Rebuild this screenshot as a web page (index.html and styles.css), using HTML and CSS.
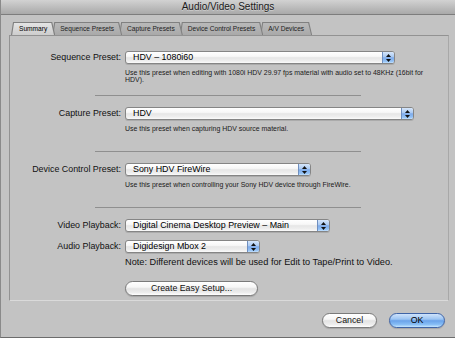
FILE: index.html
```html
<!DOCTYPE html>
<html>
<head>
<meta charset="utf-8">
<link rel="stylesheet" href="styles.css">
</head>
<body>
<div class="window">
  <div class="titlebar">Audio/Video Settings</div>
  <div class="content">
    <div class="tabs">
      <div class="tab tab-active"><span>Summary</span></div>
      <div class="tab tab-2"><span>Sequence Presets</span></div>
      <div class="tab tab-3"><span>Capture Presets</span></div>
      <div class="tab tab-4"><span>Device Control Presets</span></div>
      <div class="tab tab-5"><span>A/V Devices</span></div>
    </div>
    <div class="panel">
      <div class="section">
        <label class="label">Sequence Preset:</label>
        <div class="popup popup-seq"><span class="popup-text">HDV – 1080i60</span><span class="arrows"><svg width="5" height="8" viewBox="0 0 5 8"><polygon points="2.5,0 5,3 0,3" fill="#111"/><polygon points="0,5 5,5 2.5,8" fill="#111"/></svg></span></div>
        <p class="desc">Use this preset when editing with 1080i HDV 29.97 fps material with audio set to 48KHz (16bit for<br>HDV).</p>
      </div>
      <div class="separator"></div>
      <div class="section">
        <label class="label">Capture Preset:</label>
        <div class="popup popup-cap"><span class="popup-text">HDV</span><span class="arrows"><svg width="5" height="8" viewBox="0 0 5 8"><polygon points="2.5,0 5,3 0,3" fill="#111"/><polygon points="0,5 5,5 2.5,8" fill="#111"/></svg></span></div>
        <p class="desc">Use this preset when capturing HDV source material.</p>
      </div>
      <div class="separator"></div>
      <div class="section">
        <label class="label">Device Control Preset:</label>
        <div class="popup popup-dev"><span class="popup-text">Sony HDV FireWire</span><span class="arrows"><svg width="5" height="8" viewBox="0 0 5 8"><polygon points="2.5,0 5,3 0,3" fill="#111"/><polygon points="0,5 5,5 2.5,8" fill="#111"/></svg></span></div>
        <p class="desc">Use this preset when controlling your Sony HDV device through FireWire.</p>
      </div>
      <div class="separator"></div>
      <div class="row">
        <label class="label">Video Playback:</label>
        <div class="popup popup-vid"><span class="popup-text">Digital Cinema Desktop Preview – Main</span><span class="arrows"><svg width="5" height="8" viewBox="0 0 5 8"><polygon points="2.5,0 5,3 0,3" fill="#111"/><polygon points="0,5 5,5 2.5,8" fill="#111"/></svg></span></div>
      </div>
      <div class="row row-audio">
        <label class="label">Audio Playback:</label>
        <div class="popup popup-aud"><span class="popup-text">Digidesign Mbox 2</span><span class="arrows"><svg width="5" height="8" viewBox="0 0 5 8"><polygon points="2.5,0 5,3 0,3" fill="#111"/><polygon points="0,5 5,5 2.5,8" fill="#111"/></svg></span></div>
      </div>
      <p class="note">Note: Different devices will be used for Edit to Tape/Print to Video.</p>
      <div class="easy-row">
        <button class="pill easy">Create Easy Setup...</button>
      </div>
    </div>
    <div class="actions">
      <button class="pill cancel">Cancel</button>
      <button class="pill ok">OK</button>
    </div>
  </div>
</div>
</body>
</html>
```
FILE: styles.css
```css
html, body {
  margin: 0;
  padding: 0;
}
body {
  width: 455px;
  height: 338px;
  overflow: hidden;
  background: #c3c3c3;
  font-family: "Liberation Sans", Arial, sans-serif;
  color: #111;
}
.window {
  box-sizing: border-box;
  width: 455px;
  height: 338px;
  border-left: 1px solid #8a8a8a;
  border-bottom: 1px solid #6c6c6c;
  background: #c3c3c3;
}
.titlebar {
  height: 14px;
  line-height: 14px;
  border-bottom: 1px solid #7d7d7d;
  background: linear-gradient(#d2d2d2, #b9b9b9 60%, #a9a9a9);
  text-align: center;
  font-size: 10px;
  color: #1a1a1a;
  text-shadow: 0 1px 0 rgba(255,255,255,0.35);
}
.content {
  padding: 7px 8px 0 7px;
}
.tabs {
  display: flex;
  height: 13px;
  padding-left: 3px;
  position: relative;
  z-index: 2;
}
.tab {
  position: relative;
  height: 13px;
  padding: 0 8px;
  margin-right: -3px;
  font-size: 6.6px;
  line-height: 13px;
  color: #222;
  background: #808080;
  clip-path: polygon(2px 0, calc(100% - 3px) 0, 100% 100%, 0 100%);
}
.tab::before {
  content: "";
  position: absolute;
  top: 1px;
  left: 1px;
  right: 1px;
  bottom: 0;
  background: linear-gradient(#b9b9b9, #a9a9a9);
  clip-path: polygon(2px 0, calc(100% - 3px) 0, 100% 100%, 0 100%);
}
.tab span {
  position: relative;
}
.tab-active { z-index: 6; color: #000; }
.tab-active::before { background: linear-gradient(#e4e4e4, #cbcbcb); bottom: -1px; }
.tab-2 { z-index: 5; }
.tab-3 { z-index: 4; }
.tab-4 { z-index: 3; }
.tab-5 { z-index: 2; }
.panel {
  box-sizing: border-box;
  width: 440px;
  margin-left: 1px;
  height: 266px;
  border: 1px solid #929292;
  border-right-color: #a8a8a8;
  border-bottom-color: #dadada;
  padding-top: 15px;
  background: #c3c3c3;
}
.section {
  height: 44px;
  display: grid;
  grid-template-columns: 111px auto;
  grid-template-rows: 13px auto;
  column-gap: 4px;
  align-content: start;
}
.row {
  display: grid;
  grid-template-columns: 111px auto;
  column-gap: 4px;
  align-items: center;
}
.row-audio {
  margin-top: 8px;
}
.label {
  text-align: right;
  font-size: 8.9px;
  line-height: 13px;
  color: #111;
  white-space: nowrap;
}
.popup {
  justify-self: start;
  box-sizing: border-box;
  height: 13px;
  display: flex;
  align-items: stretch;
  border: 1px solid #858585;
  border-radius: 3px;
  background: linear-gradient(#ffffff 0%, #f7f7f7 40%, #e6e6e6 52%, #eeeeee 80%, #fbfbfb 100%);
  box-shadow: 0 1px 0 rgba(0,0,0,0.12);
}
.popup-text {
  flex: 1;
  padding-left: 7px;
  font-size: 8.9px;
  line-height: 11px;
  color: #000;
  white-space: nowrap;
}
.arrows {
  width: 11px;
  display: flex;
  align-items: center;
  justify-content: center;
  border-left: 1px solid #6f8fbf;
  border-radius: 0 2px 2px 0;
  background: linear-gradient(#d6e6fa 0%, #a9c9f2 45%, #7daaea 52%, #94c2f5 85%, #c4e2ff 100%);
}
.popup-seq { width: 270px; }
.popup-cap { width: 289px; }
.popup-dev { width: 186px; }
.popup-vid { width: 205px; }
.popup-aud { width: 135px; }
.desc {
  grid-column: 2;
  margin: 5px 0 0 0;
  font-size: 6.95px;
  line-height: 7px;
  color: #1a1a1a;
  white-space: nowrap;
}
.separator {
  width: 266px;
  height: 0;
  margin: 0 0 11px 85px;
  border-top: 1px solid #8f8f8f;
}
.note {
  margin: 4px 0 0 115px;
  font-size: 9.2px;
  line-height: 10px;
  color: #111;
  white-space: nowrap;
}
.easy-row {
  margin: 10px 0 0 115px;
}
.pill {
  box-sizing: border-box;
  height: 15px;
  padding: 0;
  border: 1px solid #7a7a7a;
  border-radius: 8px;
  font-family: "Liberation Sans", Arial, sans-serif;
  font-size: 8.8px;
  line-height: 13px;
  color: #111;
  background: linear-gradient(#ffffff 0%, #f6f6f6 40%, #e3e3e3 52%, #ededed 80%, #ffffff 100%);
  box-shadow: 0 1px 1px rgba(0,0,0,0.15);
}
.easy {
  width: 133px;
}
.actions {
  display: flex;
  justify-content: flex-end;
  gap: 12px;
  margin-top: 12px;
  padding-right: 2px;
}
.cancel {
  width: 55px;
}
.ok {
  width: 56px;
  border-color: #3f64a6;
  color: #000;
  background: linear-gradient(#cfe3fb 0%, #9cc4f2 40%, #6aa3ea 52%, #86bdf5 80%, #c6e6ff 100%);
}
```
